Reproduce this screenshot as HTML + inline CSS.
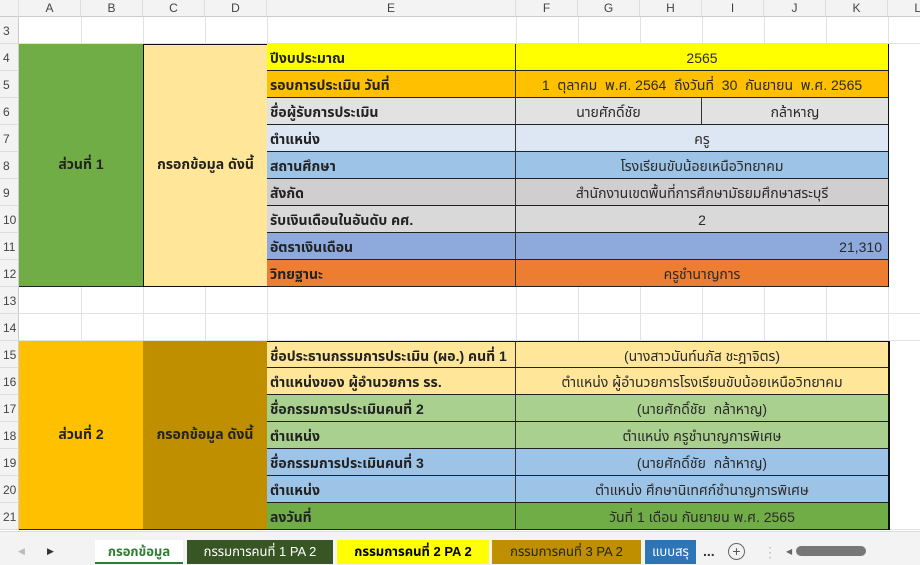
<!DOCTYPE html>
<html><head><meta charset="utf-8"><style>
*{margin:0;padding:0;box-sizing:border-box}
body{width:920px;height:565px;overflow:hidden;background:#fff;position:relative;font-family:"Liberation Sans","Noto Sans Thai","Tahoma",sans-serif;font-size:14px;color:#222}
.a{position:absolute}
.hd{background:#f3f3f3;color:#444;font-size:12px;text-align:center;line-height:17px;top:0;height:17px;border-right:1px solid #ddd;border-bottom:1px solid #ccc}
.rn{left:0;width:19px;background:#f3f3f3;color:#444;font-size:12px;line-height:29px;padding-left:3px;border-bottom:1px solid #ddd;border-right:1px solid #ccc;height:27px}
.gv{width:1px;background:#e2e2e2;top:17px;height:513px}
.gh{height:1px;background:#e2e2e2;left:19px;width:901px}
.c{height:27px;line-height:29px;border-bottom:1px solid #222;white-space:nowrap;overflow:hidden}
.l{left:267px;width:249px;padding-left:3px;font-weight:bold;border-right:1px solid #333}
.v{left:516px;width:372px;text-align:center;color:#2a2a2a}
.tab{top:540px;height:24px;line-height:24px;font-size:13px;text-align:center}
</style></head><body>
<div class="a hd" style="left:0;width:19px"></div>
<div class="a hd" style="left:19px;width:62px">A</div>
<div class="a hd" style="left:81px;width:62px">B</div>
<div class="a hd" style="left:143px;width:62px">C</div>
<div class="a hd" style="left:205px;width:62px">D</div>
<div class="a hd" style="left:267px;width:249px">E</div>
<div class="a hd" style="left:516px;width:62px">F</div>
<div class="a hd" style="left:578px;width:62px">G</div>
<div class="a hd" style="left:640px;width:62px">H</div>
<div class="a hd" style="left:702px;width:62px">I</div>
<div class="a hd" style="left:764px;width:62px">J</div>
<div class="a hd" style="left:826px;width:62px">K</div>
<div class="a hd" style="left:888px;width:40px;text-align:right;padding-right:6px">L</div>
<div class="a gv" style="left:81px"></div><div class="a gv" style="left:143px"></div><div class="a gv" style="left:205px"></div><div class="a gv" style="left:267px"></div><div class="a gv" style="left:516px"></div><div class="a gv" style="left:578px"></div><div class="a gv" style="left:640px"></div><div class="a gv" style="left:702px"></div><div class="a gv" style="left:764px"></div><div class="a gv" style="left:826px"></div><div class="a gv" style="left:888px"></div>
<div class="a gh" style="top:43px"></div><div class="a gh" style="top:313px"></div><div class="a gh" style="top:340px"></div><div class="a gh" style="top:529px"></div>
<div class="a rn" style="top:17px">3</div><div class="a rn" style="top:44px">4</div><div class="a rn" style="top:71px">5</div><div class="a rn" style="top:98px">6</div><div class="a rn" style="top:125px">7</div><div class="a rn" style="top:152px">8</div><div class="a rn" style="top:179px">9</div><div class="a rn" style="top:206px">10</div><div class="a rn" style="top:233px">11</div><div class="a rn" style="top:260px">12</div><div class="a rn" style="top:287px">13</div><div class="a rn" style="top:314px">14</div><div class="a rn" style="top:341px">15</div><div class="a rn" style="top:368px">16</div><div class="a rn" style="top:395px">17</div><div class="a rn" style="top:422px">18</div><div class="a rn" style="top:449px">19</div><div class="a rn" style="top:476px">20</div><div class="a rn" style="top:503px">21</div>
<div class="a" style="left:19px;top:44px;width:124px;height:243px;background:#70AD47;display:flex;align-items:center;justify-content:center;font-weight:bold;border-bottom:1px solid #222">ส่วนที่ 1</div>
<div class="a" style="left:143px;top:44px;width:124px;height:243px;background:#FFE699;display:flex;align-items:center;justify-content:center;font-weight:bold;border:1px solid #111;border-right:none">กรอกข้อมูล ดังนี้</div>
<div class="a" style="left:267px;top:44px;width:622px;height:243px;border:1.5px solid #111"></div>
<div class="a c l" style="top:44px;background:#FFFF00">ปีงบประมาณ</div>
<div class="a c v" style="top:44px;background:#FFFF00">2565</div>
<div class="a c l" style="top:71px;background:#FFC000">รอบการประเมิน วันที่</div>
<div class="a c v" style="top:71px;background:#FFC000">1&nbsp; ตุลาคม&nbsp; พ.ศ. 2564&nbsp; ถึงวันที่&nbsp; 30&nbsp; กันยายน&nbsp; พ.ศ. 2565</div>
<div class="a c l" style="top:98px;background:#E2E2E2">ชื่อผู้รับการประเมิน</div>
<div class="a c v" style="top:98px;width:186px;background:#E2E2E2;border-right:1px solid #333">นายศักดิ์ชัย</div>
<div class="a c v" style="top:98px;left:702px;width:186px;background:#E2E2E2">กล้าหาญ</div>
<div class="a c l" style="top:125px;background:#DDE6F3">ตำแหน่ง</div>
<div class="a c v" style="top:125px;background:#DDE6F3">ครู</div>
<div class="a c l" style="top:152px;background:#9DC3E6">สถานศึกษา</div>
<div class="a c v" style="top:152px;background:#9DC3E6">โรงเรียนขับน้อยเหนือวิทยาคม</div>
<div class="a c l" style="top:179px;background:#D0CECE">สังกัด</div>
<div class="a c v" style="top:179px;background:#D0CECE">สำนักงานเขตพื้นที่การศึกษามัธยมศึกษาสระบุรี</div>
<div class="a c l" style="top:206px;background:#D9D9D9">รับเงินเดือนในอันดับ คศ.</div>
<div class="a c v" style="top:206px;background:#D9D9D9">2</div>
<div class="a c l" style="top:233px;background:#8EA9DB">อัตราเงินเดือน</div>
<div class="a c v" style="top:233px;background:#8EA9DB;text-align:right;padding-right:6px">21,310</div>
<div class="a c l" style="top:260px;background:#ED7D31">วิทยฐานะ</div>
<div class="a c v" style="top:260px;background:#ED7D31">ครูชำนาญการ</div>
<div class="a" style="left:19px;top:341px;width:124px;height:189px;background:#FFC000;display:flex;align-items:center;justify-content:center;font-weight:bold;border-bottom:1px solid #222">ส่วนที่ 2</div>
<div class="a" style="left:143px;top:341px;width:124px;height:189px;background:#BF8F00;display:flex;align-items:center;justify-content:center;font-weight:bold;border-bottom:1px solid #222">กรอกข้อมูล ดังนี้</div>
<div class="a c l" style="top:341px;background:#FFE699;border-top:1.5px solid #111">ชื่อประธานกรรมการประเมิน (ผอ.) คนที่ 1</div>
<div class="a c v" style="top:341px;background:#FFE699;border-top:1.5px solid #111">(นางสาวนันท์นภัส ชะฎาจิตร)</div>
<div class="a c l" style="top:368px;background:#FFE699">ตำแหน่งของ ผู้อำนวยการ รร.</div>
<div class="a c v" style="top:368px;background:#FFE699">ตำแหน่ง ผู้อำนวยการโรงเรียนขับน้อยเหนือวิทยาคม</div>
<div class="a c l" style="top:395px;background:#A9D08E">ชื่อกรรมการประเมินคนที่ 2</div>
<div class="a c v" style="top:395px;background:#A9D08E">(นายศักดิ์ชัย&nbsp; กล้าหาญ)</div>
<div class="a c l" style="top:422px;background:#A9D08E">ตำแหน่ง</div>
<div class="a c v" style="top:422px;background:#A9D08E">ตำแหน่ง ครูชำนาญการพิเศษ</div>
<div class="a c l" style="top:449px;background:#9DC3E6">ชื่อกรรมการประเมินคนที่ 3</div>
<div class="a c v" style="top:449px;background:#9DC3E6">(นายศักดิ์ชัย&nbsp; กล้าหาญ)</div>
<div class="a c l" style="top:476px;background:#9DC3E6">ตำแหน่ง</div>
<div class="a c v" style="top:476px;background:#9DC3E6">ตำแหน่ง ศึกษานิเทศก์ชำนาญการพิเศษ</div>
<div class="a c l" style="top:503px;background:#70AD47">ลงวันที่</div>
<div class="a c v" style="top:503px;background:#70AD47">วันที่ 1 เดือน กันยายน พ.ศ. 2565</div>
<div class="a" style="left:888px;top:341px;width:1.5px;height:189px;background:#111"></div>
<div class="a" style="left:0;top:531px;width:920px;height:34px;background:#f3f3f3;border-top:1px solid #ddd"></div>
<div class="a" style="left:18px;top:546px;color:#bbb;font-size:9px">◀</div>
<div class="a" style="left:47px;top:546px;color:#333;font-size:9px">▶</div>
<div class="a tab" style="left:95px;width:88px;background:#fff;color:#2E7D32;font-weight:bold;border-bottom:2px solid #2E7D32">กรอกข้อมูล</div>
<div class="a tab" style="left:187px;width:146px;background:#375623;color:#fff">กรรมการคนที่ 1 PA 2</div>
<div class="a tab" style="left:337px;width:152px;background:#FFFF00;color:#000;font-weight:bold">กรรมการคนที่ 2 PA 2</div>
<div class="a tab" style="left:492px;width:149px;background:#BF8F00;color:#222">กรรมการคนที่ 3 PA 2</div>
<div class="a tab" style="left:645px;width:51px;background:#2E75B6;color:#fff">แบบสรุ</div>
<div class="a" style="left:703px;top:543px;color:#333;font-weight:bold">...</div>
<div class="a" style="left:728px;top:543px;width:17px;height:17px;border:1px solid #666;border-radius:50%;text-align:center;line-height:14px;color:#555">+</div>
<div class="a" style="left:763px;top:544px;color:#bbb">⋮</div>
<div class="a" style="left:786px;top:547px;color:#666;font-size:8px">◀</div>
<div class="a" style="left:796px;top:546px;width:70px;height:10px;background:#777;border-radius:5px"></div>
</body></html>
